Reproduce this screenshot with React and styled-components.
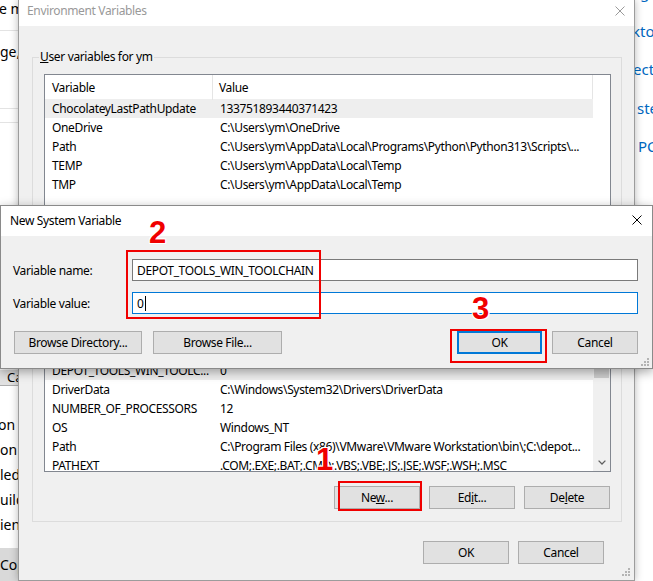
import React from "react";
import styled, { createGlobalStyle } from "styled-components";

const GlobalStyle = createGlobalStyle`
  html, body {
    margin: 0;
    padding: 0;
    background: #ffffff;
  }
  body {
    font-family: "Noto Sans", "Open Sans", sans-serif;
    font-size: 12px;
    letter-spacing: -0.35px;
    color: #000000;
  }
  #root {
    width: 653px;
    height: 581px;
    overflow: hidden;
  }
`;

const userVars = [
  ["ChocolateyLastPathUpdate", "133751893440371423"],
  ["OneDrive", "C:\\Users\\ym\\OneDrive"],
  ["Path", "C:\\Users\\ym\\AppData\\Local\\Programs\\Python\\Python313\\Scripts\\..."],
  ["TEMP", "C:\\Users\\ym\\AppData\\Local\\Temp"],
  ["TMP", "C:\\Users\\ym\\AppData\\Local\\Temp"],
];

const systemVars = [
  ["ChocolateyInstall", "C:\\ProgramData\\chocolatey"],
  ["ComSpec", "C:\\Windows\\system32\\cmd.exe"],
  ["DEPOT_TOOLS_UPDATE", "0"],
  ["DEPOT_TOOLS_WIN_TOOLC...", "0"],
  ["DriverData", "C:\\Windows\\System32\\Drivers\\DriverData"],
  ["NUMBER_OF_PROCESSORS", "12"],
  ["OS", "Windows_NT"],
  ["Path", "C:\\Program Files (x86)\\VMware\\VMware Workstation\\bin\\;C:\\depot..."],
  ["PATHEXT", ".COM;.EXE;.BAT;.CMD;.VBS;.VBE;.JS;.JSE;.WSF;.WSH;.MSC"],
];

const CloseIcon = ({ color }) => (
  <svg width="10" height="10" viewBox="0 0 10 10">
    <path d="M0.5 0.5 L9.5 9.5 M9.5 0.5 L0.5 9.5" stroke={color} strokeWidth="1" fill="none" />
  </svg>
);

const Grip = () => (
  <svg width="10" height="10" viewBox="0 0 10 10">
    {[
      [8, 2],
      [5, 5],
      [8, 5],
      [2, 8],
      [5, 8],
      [8, 8],
    ].map(([x, y]) => (
      <rect key={x + "-" + y} x={x - 1} y={y - 1} width="2" height="2" fill="#b4b4b4" />
    ))}
  </svg>
);

export default function App() {
  return (
    <>
      <GlobalStyle />
      <Desktop>
        <LeftPane>
          <PaneLine $h={31} $lh={18} $rule $shift={-1}>e mode</PaneLine>
          <PaneLine $h={78} $lh={18} $pt={12} $rule>ge, and</PaneLine>
          <PaneLine $h={14} $rule />
          <PaneButton>Cancel</PaneButton>
          <PaneLine $h={25} $mt={26} $shift={-2}>on</PaneLine>
          <PaneLine $h={25}>on</PaneLine>
          <PaneLine $h={25}>led</PaneLine>
          <PaneLine $h={25}>uild</PaneLine>
          <PaneLine $h={25}>ien</PaneLine>
          <PaneLine $h={33} $mt={11} $bg="#d9d9d9">Cop</PaneLine>
        </LeftPane>

        <RightPane>
          <LinkLine $first $shift={5}>g</LinkLine>
          <LinkLine $shift={-3}>ktop</LinkLine>
          <LinkLine $shift={-2}>ection</LinkLine>
          <LinkLine $shift={2}>stem</LinkLine>
          <LinkLine $shift={3}>PC</LinkLine>
        </RightPane>

        <EnvDialog>
          <EnvTitleBar>
            <span>Environment Variables</span>
            <TitleClose $top={4}>
              <CloseIcon color="#9a9a9a" />
            </TitleClose>
          </EnvTitleBar>
          <EnvBody>
            <GroupBox $top={23}>
              <GroupLabel>
                <u>U</u>ser variables for ym
              </GroupLabel>
              <ListBox $top={9} $height={139}>
                <ListContent>
                  <ListHeader>
                    <HeadCell $first>Variable</HeadCell>
                    <HeadCell>Value</HeadCell>
                  </ListHeader>
                  {userVars.map(([name, value], i) => (
                    <ListRow key={name} $selected={i === 0}>
                      <Cell>{name}</Cell>
                      <Cell>{value}</Cell>
                    </ListRow>
                  ))}
                </ListContent>
                <ScrollGap />
              </ListBox>
              <ButtonRow $top={0}>
                <DlgButton>
                  N<u>e</u>w...
                </DlgButton>
                <DlgButton>
                  E<u>d</u>it...
                </DlgButton>
                <DlgButton>
                  <u>D</u>elete
                </DlgButton>
              </ButtonRow>
            </GroupBox>

            <GroupBox $top={6}>
              <GroupLabel>
                <u>S</u>ystem variables
              </GroupLabel>
              <ListBox $top={8} $height={193}>
                <ListContent>
                  <ListHeader>
                    <HeadCell $first>Variable</HeadCell>
                    <HeadCell>Value</HeadCell>
                  </ListHeader>
                  {systemVars.map(([name, value], i) => (
                    <ListRow key={name} $selected={i === 3}>
                      <Cell>{name}</Cell>
                      <Cell>{value}</Cell>
                    </ListRow>
                  ))}
                </ListContent>
                <ScrollBar>
                  <ScrollArrow />
                  <ScrollThumb />
                  <ScrollTrack />
                  <ScrollArrow>
                    <svg width="8" height="5" viewBox="0 0 8 5">
                      <polyline points="0.6,0.6 4,4 7.4,0.6" fill="none" stroke="#606060" strokeWidth="1.3" />
                    </svg>
                  </ScrollArrow>
                </ScrollBar>
              </ListBox>
              <ButtonRow $top={14}>
                <DlgButton>
                  Ne<u>w</u>...
                </DlgButton>
                <DlgButton>
                  Ed<u>i</u>t...
                </DlgButton>
                <DlgButton>
                  De<u>l</u>ete
                </DlgButton>
              </ButtonRow>
            </GroupBox>

            <FooterRow>
              <DlgButton>OK</DlgButton>
              <DlgButton>Cancel</DlgButton>
            </FooterRow>
          </EnvBody>
          <GripCorner $right={3} $bottom={3}>
            <Grip />
          </GripCorner>
        </EnvDialog>

        <NewDialog>
          <NewTitleBar>
            <span>New System Variable</span>
            <CloseIcon color="#000000" />
          </NewTitleBar>
          <NewBody>
            <FieldGrid>
              <FieldLabel>Variable name:</FieldLabel>
              <TextBox>DEPOT_TOOLS_WIN_TOOLCHAIN</TextBox>
              <FieldLabel>Variable value:</FieldLabel>
              <TextBox $focused>
                0<Caret />
              </TextBox>
            </FieldGrid>
            <BrowseRow>
              <DlgButton $w={128}>Browse Directory...</DlgButton>
              <DlgButton $w={129}>Browse File...</DlgButton>
              <Spacer />
              <DlgButton $w={85} $default>
                OK
              </DlgButton>
              <DlgButton $w={86}>Cancel</DlgButton>
            </BrowseRow>
          </NewBody>
          <GripCorner $right={2} $bottom={1}>
            <Grip />
          </GripCorner>
        </NewDialog>

        <Marker $x={316} $y={444}>1</Marker>
        <Marker $x={149} $y={217}>2</Marker>
        <Marker $x={472} $y={293}>3</Marker>
        <Callout $x={126} $y={250} $w={195} $h={69} />
        <Callout $x={450} $y={329} $w={97} $h={34} />
        <Callout $x={338} $y={481} $w={84} $h={30} />
      </Desktop>
    </>
  );
}

const Desktop = styled.div`
  position: relative;
  width: 653px;
  height: 581px;
  overflow: hidden;
  background: #ffffff;
`;

/* background windows peeking out at the edges */
const LeftPane = styled.div`
  position: absolute;
  left: 0;
  top: 0;
  width: 40px;
  height: 581px;
  z-index: 1;
  display: flex;
  flex-direction: column;
  background: #ffffff;
  font-size: 14px;
  letter-spacing: 0;
  color: #000;
`;

const PaneLine = styled.div`
  box-sizing: border-box;
  flex: none;
  height: ${(p) => p.$h}px;
  margin-top: ${(p) => p.$mt || 0}px;
  padding-top: ${(p) => p.$pt || 0}px;
  padding-left: ${(p) => Math.max(p.$shift || 0, 0)}px;
  text-indent: ${(p) => Math.min(p.$shift || 0, 0)}px;
  line-height: ${(p) => p.$lh || p.$h}px;
  border-bottom: ${(p) => (p.$rule ? "1px solid #e3e3e3" : "none")};
  background: ${(p) => p.$bg || "transparent"};
  white-space: nowrap;
  overflow: hidden;
`;

const PaneButton = styled.div`
  box-sizing: border-box;
  flex: none;
  margin-top: 247px;
  height: 16px;
  padding-left: 7px;
  line-height: 15px;
  font-size: 13px;
  background: #e1e1e1;
  border-bottom: 1px solid #adadad;
  white-space: nowrap;
`;

const RightPane = styled.div`
  position: absolute;
  left: 635px;
  top: 0;
  width: 18px;
  height: 581px;
  z-index: 1;
  overflow: hidden;
  background: #ffffff;
  font-size: 15px;
  letter-spacing: 0;
  color: #0067c0;
`;

const LinkLine = styled.div`
  height: 38.5px;
  line-height: 38.5px;
  margin-top: ${(p) => (p.$first ? -27 : 0)}px;
  margin-left: ${(p) => p.$shift || 0}px;
  white-space: nowrap;
`;

/* Environment Variables dialog */
const EnvDialog = styled.section`
  position: absolute;
  left: 18px;
  top: 0;
  width: 617px;
  height: 581px;
  z-index: 2;
  box-sizing: border-box;
  border: 1px solid #9c9c9c;
  border-top: none;
  background: #f0f0f0;
  box-shadow: 0 0 8px rgba(0, 0, 0, 0.28);
  display: flex;
  flex-direction: column;
`;

const EnvTitleBar = styled.header`
  flex: none;
  height: 26px;
  box-sizing: border-box;
  padding: 2px 9px 0 8px;
  display: flex;
  justify-content: space-between;
  align-items: flex-start;
  background: #ffffff;
  color: #999999;
  font-size: 12px;
  line-height: 18px;
`;

const TitleClose = styled.span`
  display: flex;
  margin-top: ${(p) => p.$top}px;
`;

const EnvBody = styled.div`
  flex: 1;
  display: flex;
  flex-direction: column;
`;

const GroupBox = styled.fieldset`
  margin: ${(p) => p.$top}px 12px 0 13px;
  padding: 0 10px 12px 11px;
  border: 1px solid #dcdcdc;
  min-width: 0;
`;

const GroupLabel = styled.legend`
  margin-left: -5px;
  padding: 0 1px;
  line-height: 16px;
  font-size: 12px;
`;

const ListBox = styled.div`
  box-sizing: border-box;
  margin-top: ${(p) => p.$top}px;
  height: ${(p) => p.$height}px;
  border: 1px solid #828790;
  background: #ffffff;
  display: flex;
  overflow: hidden;
`;

const ListContent = styled.div`
  flex: 1;
  min-width: 0;
  overflow: hidden;
`;

const ListHeader = styled.div`
  display: grid;
  grid-template-columns: 168px 1fr;
  height: 24px;
  border-right: 1px solid #e5e5e5;
`;

const HeadCell = styled.div`
  padding-left: ${(p) => (p.$first ? 7 : 6)}px;
  line-height: 25px;
  border-right: ${(p) => (p.$first ? "1px solid #e5e5e5" : "none")};
  white-space: nowrap;
`;

const ListRow = styled.div`
  display: grid;
  grid-template-columns: 168px 1fr;
  height: 19px;
  line-height: 19px;
  background: ${(p) => (p.$selected ? "#eeeeee" : "transparent")};
`;

const Cell = styled.div`
  padding-left: 7px;
  white-space: nowrap;
  overflow: hidden;
`;

const ScrollGap = styled.div`
  flex: none;
  width: 17px;
`;

const ScrollBar = styled.div`
  flex: none;
  width: 17px;
  display: flex;
  flex-direction: column;
  background: #f0f0f0;
`;

const ScrollArrow = styled.div`
  flex: none;
  height: 17px;
  display: flex;
  align-items: center;
  justify-content: center;
`;

const ScrollThumb = styled.div`
  flex: none;
  height: 81px;
  margin: 0 1px;
  background: #cdcdcd;
`;

const ScrollTrack = styled.div`
  flex: 1;
`;

const ButtonRow = styled.div`
  margin-top: ${(p) => p.$top}px;
  display: flex;
  justify-content: flex-end;
  gap: 9px;
  margin-right: 1px;
`;

const DlgButton = styled.button`
  flex: none;
  box-sizing: border-box;
  width: ${(p) => p.$w || 86}px;
  height: 23px;
  padding: 0;
  font-family: inherit;
  font-size: 12px;
  letter-spacing: inherit;
  color: #000;
  background: #e1e1e1;
  border: ${(p) => (p.$default ? "2px solid #0078d7" : "1px solid #adadad")};
  border-radius: 0;
  white-space: nowrap;
`;

const FooterRow = styled.div`
  margin-top: 19px;
  padding-right: 30px;
  display: flex;
  justify-content: flex-end;
  gap: 9px;
`;

const GripCorner = styled.div`
  position: absolute;
  right: ${(p) => p.$right}px;
  bottom: ${(p) => p.$bottom}px;
  display: flex;
`;

/* New System Variable dialog */
const NewDialog = styled.section`
  position: absolute;
  left: 0;
  top: 205px;
  width: 653px;
  height: 164px;
  z-index: 3;
  box-sizing: border-box;
  border: 1px solid #8a8a8a;
  background: #f0f0f0;
  box-shadow: 0 3px 10px rgba(0, 0, 0, 0.35);
  display: flex;
  flex-direction: column;
`;

const NewTitleBar = styled.header`
  flex: none;
  height: 30px;
  box-sizing: border-box;
  padding: 0 10px 2px 9px;
  display: flex;
  justify-content: space-between;
  align-items: center;
  background: #ffffff;
  font-size: 12px;
`;

const NewBody = styled.div`
  padding: 23px 14px 0 12px;
  display: flex;
  flex-direction: column;
`;

const FieldGrid = styled.div`
  display: grid;
  grid-template-columns: 119px 1fr;
  row-gap: 11px;
  align-items: center;
`;

const FieldLabel = styled.label`
  white-space: nowrap;
`;

const TextBox = styled.div`
  box-sizing: border-box;
  height: 22px;
  padding-left: 4px;
  display: flex;
  align-items: center;
  background: #ffffff;
  border: 1px solid ${(p) => (p.$focused ? "#0078d7" : "#7a7a7a")};
  white-space: nowrap;
`;

const Caret = styled.span`
  display: inline-block;
  width: 0;
  height: 15px;
  margin-left: 1px;
  border-left: 1px solid #000;
`;

const BrowseRow = styled.div`
  margin-top: 17px;
  margin-left: 1px;
  display: flex;
  gap: 11px;

  & > button:last-child {
    margin-left: -1px;
  }
`;

const Spacer = styled.div`
  flex: 1;
`;

/* red annotations drawn over the screenshot */
const Marker = styled.span`
  position: absolute;
  left: ${(p) => p.$x}px;
  top: ${(p) => p.$y}px;
  z-index: 5;
  font-family: "Liberation Sans", Arial, sans-serif;
  font-weight: 700;
  font-size: 31px;
  line-height: 31px;
  letter-spacing: 0;
  color: #f00000;
  text-shadow: 1px 0 #fff, -1px 0 #fff, 0 1px #fff, 0 -1px #fff, 1px 1px #fff, -1px -1px #fff,
    1px -1px #fff, -1px 1px #fff;
`;

const Callout = styled.div`
  position: absolute;
  left: ${(p) => p.$x}px;
  top: ${(p) => p.$y}px;
  width: ${(p) => p.$w}px;
  height: ${(p) => p.$h}px;
  z-index: 4;
  box-sizing: border-box;
  border: 2px solid #f00000;
`;
